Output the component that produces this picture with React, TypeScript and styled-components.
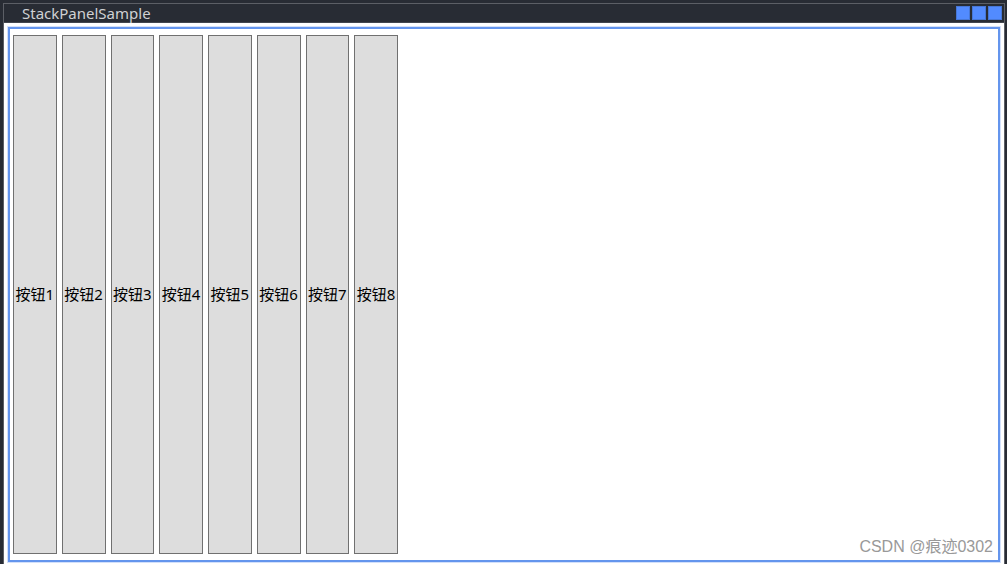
import React from "react";
import styled, { createGlobalStyle } from "styled-components";

const GlobalStyle = createGlobalStyle`
  * { box-sizing: border-box; }
  body { margin: 0; background: #282c34; }
`;

const Desktop = styled.div`
  display: flex;
  height: 100vh;
  padding: 3px 2px 0 3px;
  background: #282c34;
  font-family: "Noto Sans", "Noto Sans CJK SC", sans-serif;
`;

const Window = styled.main`
  flex: 1;
  display: flex;
  flex-direction: column;
  border: 1px solid #5c5f66;
  border-bottom: 0;
  background: #fff;
`;

const TitleBar = styled.header`
  display: flex;
  align-items: center;
  justify-content: space-between;
  height: 19px;
  padding: 0 2px 0 18px;
  background: #282c34;
  border-bottom: 1px solid #42464e;
`;

const Title = styled.h1`
  margin: 0;
  font-size: 15px;
  font-weight: 400;
  line-height: 18px;
  color: #d0d1d3;
`;

const WindowControls = styled.div`
  display: flex;
  gap: 2px;
`;

const WindowButton = styled.button`
  width: 14px;
  height: 14px;
  padding: 0;
  border: 1px solid #4777d6;
  background: #528bff;
`;

const Frame = styled.section`
  flex: 1;
  position: relative;
  display: flex;
  margin: 4px 4px 2px;
  padding: 6px 3px;
  border: 2px solid #6495ed;
  box-shadow: 0 0 0 1px #d3e0fa;
`;

const StackPanel = styled.div`
  display: flex;
  gap: 5px;
  width: 385px;
`;

const StackButton = styled.button`
  flex: 1 1 0;
  min-width: 0;
  padding: 0 0 2px;
  border: 1px solid #707070;
  background: #ddd;
  color: #000;
  font-family: inherit;
  font-size: 15px;
  line-height: 20px;
  white-space: nowrap;
`;

const Watermark = styled.span`
  position: absolute;
  right: 5px;
  bottom: 2px;
  font-family: "Liberation Sans", "Noto Sans CJK SC", sans-serif;
  font-size: 16px;
  line-height: 22px;
  color: #999;
`;

const controls = ["Minimize", "Maximize", "Close"];
const buttons = [1, 2, 3, 4, 5, 6, 7, 8];

export default function App() {
  return (
    <>
      <GlobalStyle />
      <Desktop>
        <Window>
          <TitleBar>
            <Title>StackPanelSample</Title>
            <WindowControls>
              {controls.map((name) => (
                <WindowButton key={name} type="button" aria-label={name} />
              ))}
            </WindowControls>
          </TitleBar>
          <Frame>
            <StackPanel>
              {buttons.map((n) => (
                <StackButton key={n} type="button">{`按钮${n}`}</StackButton>
              ))}
            </StackPanel>
            <Watermark>CSDN @痕迹0302</Watermark>
          </Frame>
        </Window>
      </Desktop>
    </>
  );
}
